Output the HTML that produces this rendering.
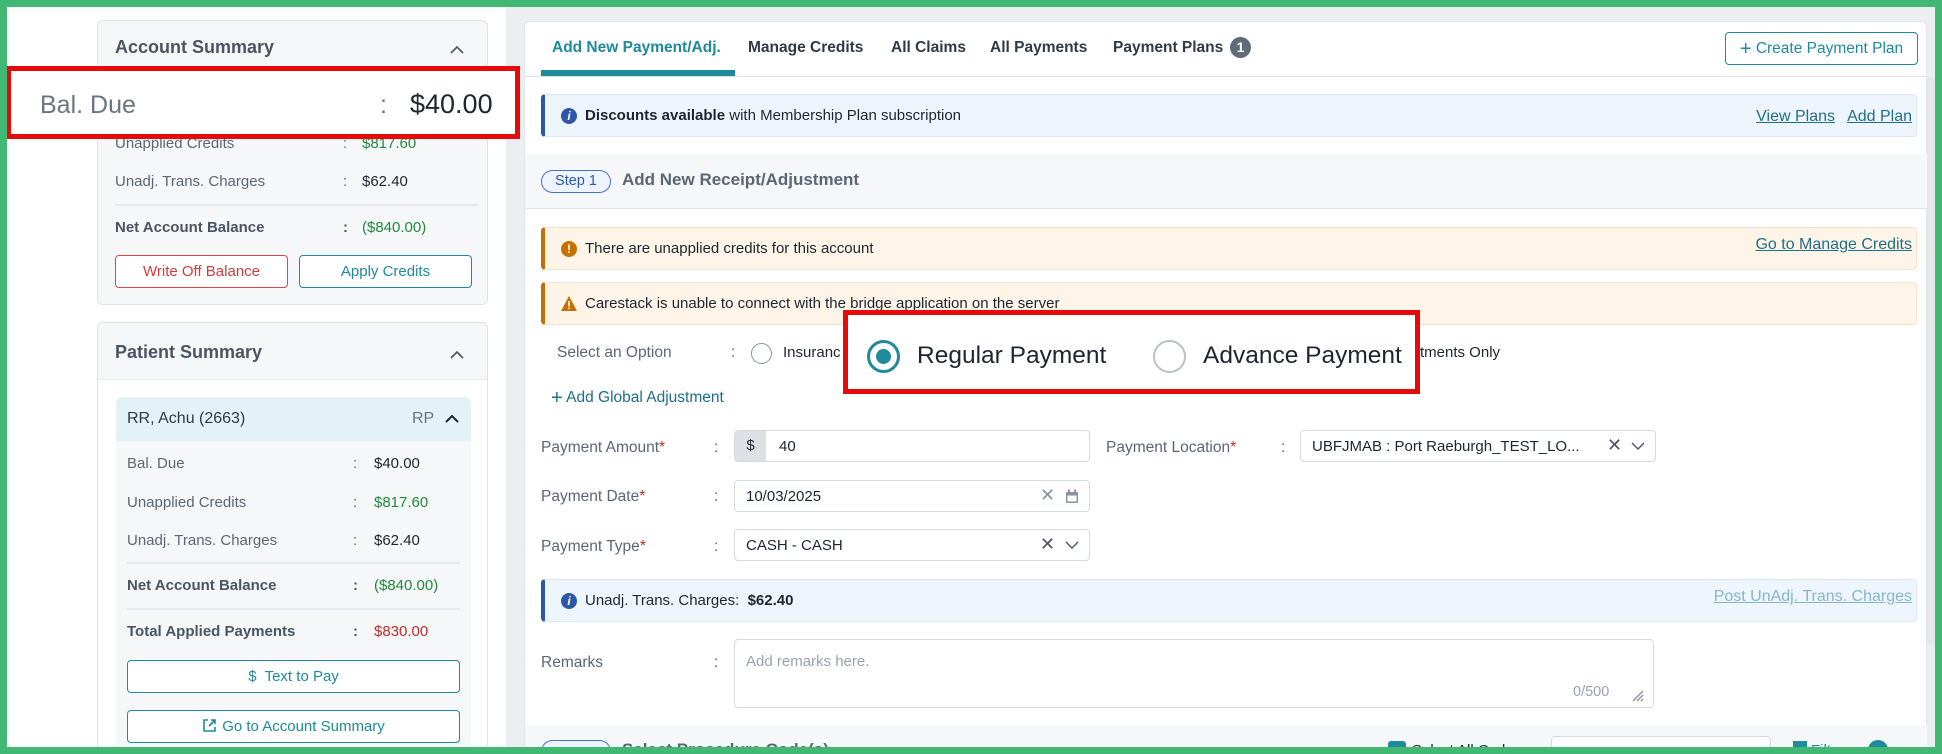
<!DOCTYPE html>
<html><head><meta charset="utf-8">
<style>
*{box-sizing:border-box;margin:0;padding:0}
html,body{width:1942px;height:754px;overflow:hidden;background:#41b975;font-family:"Liberation Sans",Arial,sans-serif;color:#1d2630}
.a{position:absolute;white-space:nowrap}
#app{position:absolute;left:7px;top:7px;width:1928px;height:740px;background:#fff;overflow:hidden}
.box{position:absolute;border:1px solid #dfe3e8;border-radius:6px;background:#f6f7f9}
.lab{color:#5b6675;font-size:15px}
.val{font-size:15px;color:#1d2630}
.bold{font-weight:bold;color:#4a5563}
.green{color:#1e8a3c}
.red{color:#c02b2b}
.teal{color:#1e8a9c}
.btn{position:absolute;border:1px solid #1e8a9c;border-radius:4px;background:#fff;color:#1e8a9c;font-size:15px;text-align:center}
.banner{position:absolute;left:534px;width:1376px;height:43px;border-radius:4px}
.info{background:#eff5fd;border:1px solid #dbe7f7;border-left:4px solid #2f57a8}
.warn{background:#fef4e8;border:1px solid #f7e2c9;border-left:4px solid #c66f00}
.inp{position:absolute;border:1px solid #d5dae1;border-radius:4px;background:#fff;font-size:15px}
.flab{color:#5b6675;font-size:15.5px}
.req{color:#c02b2b}
.link{text-decoration:underline;color:#1e6f88;font-size:16px}
</style></head><body>
<div id="app">
<div class="a" style="left:499px;top:0;width:1429px;height:740px;background:#eceff2"></div>

<div class="box" style="left:90px;top:13px;width:391px;height:285px"></div>
<div class="a bold" style="left:108px;top:30px;font-size:18px">Account Summary</div>
<svg class="a" style="left:442px;top:38px" width="16" height="10"><path d="M2 8 L8 2 L14 8" stroke="#4a5563" stroke-width="1.6" fill="none"/></svg>
<div class="a lab" style="left:108px;top:128px">Unapplied Credits</div><div class="a lab" style="left:336px;top:128px">:</div><div class="a val green" style="left:355px;top:128px">$817.60</div>
<div class="a lab" style="left:108px;top:166px">Unadj. Trans. Charges</div><div class="a lab" style="left:336px;top:166px">:</div><div class="a val" style="left:355px;top:166px">$62.40</div>
<div class="a" style="left:108px;top:197px;width:364px;height:2px;background:#e6e9ed"></div>
<div class="a lab bold" style="left:108px;top:212px">Net Account Balance</div><div class="a lab bold" style="left:336px;top:212px">:</div><div class="a val green" style="left:355px;top:212px">($840.00)</div>
<div class="btn" style="left:108px;top:248px;width:173px;height:33px;line-height:31px;border-color:#d9474a;color:#d23b3e">Write Off Balance</div>
<div class="btn" style="left:292px;top:248px;width:173px;height:33px;line-height:31px">Apply Credits</div>

<div class="a" style="left:-1px;top:59px;width:514px;height:73px;background:#fff;border:5px solid #e70a0a"></div>
<div class="a" style="left:33px;top:84px;font-size:25px;color:#6b7480">Bal. Due</div>
<div class="a" style="left:373px;top:84px;font-size:25px;color:#6b7480">:</div>
<div class="a" style="left:403px;top:82px;font-size:27px;color:#1d2630">$40.00</div>

<div class="box" style="left:90px;top:315px;width:391px;height:440px;background:#fff"></div>
<div class="a" style="left:91px;top:316px;width:389px;height:57px;background:#f6f7f9;border-bottom:1px solid #e8ebef;border-radius:6px 6px 0 0"></div>
<div class="a bold" style="left:108px;top:335px;font-size:18px">Patient Summary</div>
<svg class="a" style="left:442px;top:343px" width="16" height="10"><path d="M2 8 L8 2 L14 8" stroke="#4a5563" stroke-width="1.6" fill="none"/></svg>
<div class="a" style="left:109px;top:390px;width:355px;height:360px;background:#f5f7f9;border-radius:6px"></div>
<div class="a" style="left:109px;top:390px;width:355px;height:44px;background:#e3f2f7;border-radius:6px 6px 0 0"></div>
<div class="a val" style="left:120px;top:403px;font-size:16px;color:#2f3a46">RR, Achu (2663)</div>
<div class="a" style="left:405px;top:403px;font-size:16px;color:#6b7480">RP</div>
<svg class="a" style="left:437px;top:407px" width="16" height="10"><path d="M2 8 L8 2 L14 8" stroke="#1d2630" stroke-width="2" fill="none"/></svg>
<div class="a lab" style="left:120px;top:448px">Bal. Due</div><div class="a lab" style="left:346px;top:448px">:</div><div class="a val" style="left:367px;top:448px">$40.00</div>
<div class="a lab" style="left:120px;top:487px">Unapplied Credits</div><div class="a lab" style="left:346px;top:487px">:</div><div class="a val green" style="left:367px;top:487px">$817.60</div>
<div class="a lab" style="left:120px;top:525px">Unadj. Trans. Charges</div><div class="a lab" style="left:346px;top:525px">:</div><div class="a val" style="left:367px;top:525px">$62.40</div>
<div class="a" style="left:120px;top:555px;width:333px;height:2px;background:#e6e9ed"></div>
<div class="a lab bold" style="left:120px;top:570px">Net Account Balance</div><div class="a lab bold" style="left:346px;top:570px">:</div><div class="a val green" style="left:367px;top:570px">($840.00)</div>
<div class="a" style="left:120px;top:601px;width:333px;height:2px;background:#e6e9ed"></div>
<div class="a lab bold" style="left:120px;top:616px">Total Applied Payments</div><div class="a lab bold" style="left:346px;top:616px">:</div><div class="a val red" style="left:367px;top:616px">$830.00</div>
<div class="btn" style="left:120px;top:653px;width:333px;height:33px;line-height:31px">$&nbsp; Text to Pay</div>
<div class="btn" style="left:120px;top:703px;width:333px;height:33px;line-height:31px"><svg width="15" height="15" style="vertical-align:-2px;margin-right:5px"><path d="M6 2 H2 V13 H13 V9 M9 2 H13 V6 M13 2 L7 8" stroke="#1e8a9c" stroke-width="1.6" fill="none"/></svg>Go to Account Summary</div>

<div class="a" style="left:517px;top:14px;width:1403px;height:740px;background:#fff;border:1px solid #e1e5ea;border-radius:6px"></div>
<div class="a" style="left:517px;top:69px;width:1403px;height:1px;background:#dde2e8"></div>
<div class="a teal" style="left:545px;top:32px;font-size:15.5px;font-weight:bold">Add New Payment/Adj.</div>
<div class="a" style="left:534px;top:63px;width:194px;height:6px;background:#1e8a9c"></div>
<div class="a" style="left:741px;top:32px;font-size:15.5px;font-weight:bold;color:#2f3a46">Manage Credits</div>
<div class="a" style="left:884px;top:32px;font-size:15.5px;font-weight:bold;color:#2f3a46">All Claims</div>
<div class="a" style="left:983px;top:32px;font-size:15.5px;font-weight:bold;color:#2f3a46">All Payments</div>
<div class="a" style="left:1106px;top:32px;font-size:15.5px;font-weight:bold;color:#2f3a46">Payment Plans</div>
<div class="a" style="left:1223px;top:30px;width:21px;height:21px;border-radius:50%;background:#5f6b78;color:#fff;font-size:14px;text-align:center;line-height:21px;font-weight:bold">1</div>
<div class="btn" style="left:1718px;top:25px;width:193px;height:33px;line-height:31px;font-size:15.5px"><span style="font-size:20px;vertical-align:-2px">+</span> Create Payment Plan</div>
<div class="a" style="left:1920px;top:71px;width:8px;height:566px;background:#e5e7ea"></div>

<div class="banner info" style="top:87px"></div>
<div class="a" style="left:554px;top:101px;width:16px;height:16px;border-radius:50%;background:#2f57a8;color:#fff;font-size:12px;font-weight:bold;text-align:center;line-height:16px;font-style:italic">i</div>
<div class="a" style="left:578px;top:100px;font-size:15px"><b>Discounts available</b> with Membership Plan subscription</div>
<div class="a link" style="right:100px;top:101px">View Plans</div>
<div class="a link" style="right:23px;top:101px">Add Plan</div>

<div class="a" style="left:518px;top:147px;width:1402px;height:55px;background:#f5f7f9;border-bottom:1px solid #dde2e8"></div>
<div class="a" style="left:534px;top:163px;width:70px;height:23px;border:1px solid #4a72c4;border-radius:12px;background:#eef4fd;color:#2f57a8;font-size:14.5px;text-align:center;line-height:21px">Step 1</div>
<div class="a" style="left:615px;top:163px;font-size:17px;font-weight:bold;color:#5b6675">Add New Receipt/Adjustment</div>

<div class="banner warn" style="top:220px"></div>
<div class="a" style="left:554px;top:234px;width:16px;height:16px;border-radius:50%;background:#c66f00;color:#fff;font-size:12px;font-weight:bold;text-align:center;line-height:16px">!</div>
<div class="a" style="left:578px;top:233px;font-size:15px">There are unapplied credits for this account</div>
<div class="a link" style="right:23px;top:229px">Go to Manage Credits</div>
<div class="banner warn" style="top:275px"></div>
<svg class="a" style="left:553px;top:288px" width="18" height="17"><path d="M9 1 L17 16 H1 Z" fill="#c66f00"/><rect x="8.2" y="6" width="1.6" height="5.5" fill="#fff"/><rect x="8.2" y="12.6" width="1.6" height="1.6" fill="#fff"/></svg>
<div class="a" style="left:578px;top:288px;font-size:15px">Carestack is unable to connect with the bridge application on the server</div>

<div class="a flab" style="left:550px;top:337px">Select an Option</div>
<div class="a flab" style="left:724px;top:337px">:</div>
<div class="a" style="left:744px;top:336px;width:21px;height:21px;border:1px solid #8a939e;border-radius:50%"></div>
<div class="a" style="left:776px;top:337px;font-size:15px">Insuranc</div>
<div class="a" style="left:1413px;top:337px;font-size:15px">tments Only</div>

<div class="a" style="left:836px;top:303px;width:577px;height:84px;background:#fff;border:5px solid #e70a0a"></div>
<div class="a" style="left:860px;top:333px;width:33px;height:33px;border:3px solid #1e8a9c;border-radius:50%"></div>
<div class="a" style="left:869px;top:342px;width:15px;height:15px;background:#1e8a9c;border-radius:50%"></div>
<div class="a" style="left:910px;top:335px;font-size:24.5px;color:#1d2630">Regular Payment</div>
<div class="a" style="left:1146px;top:333px;width:33px;height:33px;border:2px solid #b7c1c7;border-radius:50%"></div>
<div class="a" style="left:1196px;top:335px;font-size:24.5px;color:#1d2630">Advance Payment</div>

<div class="a teal" style="left:544px;top:380px;font-size:15.5px;color:#1e6f88"><span style="font-size:20px;vertical-align:-2px">+</span> Add Global Adjustment</div>

<div class="a flab" style="left:534px;top:432px">Payment Amount<span class="req">*</span></div>
<div class="a flab" style="left:707px;top:432px">:</div>
<div class="inp" style="left:727px;top:423px;width:356px;height:32px"><div style="position:absolute;left:0;top:0;width:31px;height:30px;background:#dde1e6;text-align:center;line-height:30px">$</div><div style="position:absolute;left:44px;top:7px">40</div></div>
<div class="a flab" style="left:1099px;top:432px">Payment Location<span class="req">*</span></div>
<div class="a flab" style="left:1274px;top:432px">:</div>
<div class="inp" style="left:1293px;top:423px;width:356px;height:32px"><div style="position:absolute;left:11px;top:7px">UBFJMAB : Port Raeburgh_TEST_LO...</div><div style="position:absolute;left:306px;top:4px;font-size:18px;color:#4a5563">✕</div><svg style="position:absolute;left:330px;top:11px" width="14" height="9"><path d="M1 1 L7 7 L13 1" stroke="#4a5563" stroke-width="1.4" fill="none"/></svg></div>

<div class="a flab" style="left:534px;top:481px">Payment Date<span class="req">*</span></div>
<div class="a flab" style="left:707px;top:481px">:</div>
<div class="inp" style="left:727px;top:473px;width:356px;height:32px"><div style="position:absolute;left:11px;top:7px">10/03/2025</div><div style="position:absolute;left:305px;top:4px;font-size:18px;color:#8a939e">✕</div><svg style="position:absolute;left:330px;top:8px" width="14" height="15"><rect x="1" y="3" width="12" height="11" rx="1" fill="#8a939e"/><rect x="2.5" y="6.5" width="9" height="6" fill="#fff"/><rect x="3" y="0.5" width="2" height="3" fill="#8a939e"/><rect x="9" y="0.5" width="2" height="3" fill="#8a939e"/></svg></div>

<div class="a flab" style="left:534px;top:531px">Payment Type<span class="req">*</span></div>
<div class="a flab" style="left:707px;top:531px">:</div>
<div class="inp" style="left:727px;top:522px;width:356px;height:32px"><div style="position:absolute;left:11px;top:7px">CASH - CASH</div><div style="position:absolute;left:305px;top:4px;font-size:18px;color:#4a5563">✕</div><svg style="position:absolute;left:330px;top:11px" width="14" height="9"><path d="M1 1 L7 7 L13 1" stroke="#4a5563" stroke-width="1.4" fill="none"/></svg></div>

<div class="banner info" style="top:572px"></div>
<div class="a" style="left:554px;top:586px;width:16px;height:16px;border-radius:50%;background:#2f57a8;color:#fff;font-size:12px;font-weight:bold;text-align:center;line-height:16px;font-style:italic">i</div>
<div class="a" style="left:578px;top:585px;font-size:15px">Unadj. Trans. Charges:&nbsp; <b>$62.40</b></div>
<div class="a link" style="right:23px;top:581px;color:#86b7c8">Post UnAdj. Trans. Charges</div>

<div class="a flab" style="left:534px;top:647px">Remarks</div>
<div class="a flab" style="left:707px;top:647px">:</div>
<div class="inp" style="left:727px;top:632px;width:920px;height:69px"><div style="position:absolute;left:11px;top:13px;color:#9aa3ad">Add remarks here.</div><div style="position:absolute;left:838px;top:44px;color:#9aa3ad;font-size:14.5px">0/500</div><svg style="position:absolute;left:895px;top:48px" width="14" height="14"><path d="M3 13 L13 3 M7 13 L13 7 M11 13 L13 11" stroke="#8a939e" stroke-width="1.4"/></svg></div>

<div class="a" style="left:518px;top:718px;width:1402px;height:30px;background:#f5f7f9"></div>
<div class="a" style="left:534px;top:733px;width:70px;height:23px;border:1px solid #4a72c4;border-radius:12px;background:#eef4fd"></div>
<div class="a" style="left:615px;top:733px;font-size:17px;font-weight:bold;color:#5b6675">Select Procedure Code(s)</div>
<div class="a" style="left:1381px;top:734px;width:18px;height:18px;background:#1e8a9c;border-radius:3px"></div>
<div class="a" style="left:1405px;top:735px;font-size:15px">Select All Codes</div>
<div class="a" style="left:1544px;top:729px;width:220px;height:30px;border:1px solid #d5dae1;border-radius:4px;background:#fff"></div>
<div class="a" style="left:1786px;top:734px;width:14px;height:12px;background:#1e8a9c"></div>
<div class="a teal" style="left:1804px;top:735px;font-size:15px">Filter</div>
<div class="a" style="left:1861px;top:733px;width:20px;height:20px;border-radius:50%;background:#1e8a9c"></div>
</div>
</body></html>
